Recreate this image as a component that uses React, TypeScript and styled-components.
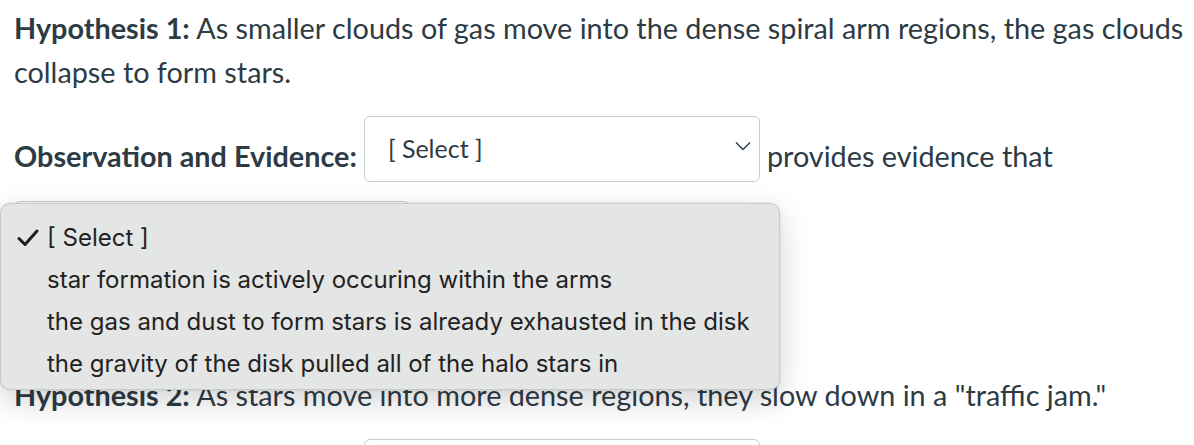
import React from 'react';
import styled, { createGlobalStyle } from 'styled-components';

const GlobalStyle = createGlobalStyle`
    html, body {
        margin: 0;
        padding: 0;
        background: #ffffff;
    }
    body {
        font-family: Lato, "Liberation Sans", sans-serif;
        color: #2d3b45;
        overflow: hidden;
    }
`;

const Page = styled.div`
    position: relative;
    width: 1194px;
    height: 445px;
    padding: 6px 4px 0 14px;
    box-sizing: border-box;
    overflow: hidden;
`;

const Para = styled.p`
    margin: 0;
    font-size: 28.8px;
    line-height: 44px;
    strong {
        font-weight: 700;
    }
`;

const Row = styled.div`
    display: flex;
    flex-wrap: wrap;
    align-items: center;
    column-gap: 7px;
    row-gap: 19px;
    margin-top: 22px;
    font-size: 28.8px;
`;

const Label = styled.strong`
    font-weight: 700;
    margin-top: 14px;
`;

const Plain = styled.span`
    margin-top: 14px;
`;

const SelectBox = styled.div`
    display: flex;
    align-items: center;
    justify-content: space-between;
    width: 396px;
    height: 66px;
    box-sizing: border-box;
    padding: 0 8px 0 23px;
    border: 1px solid #c7cdd1;
    border-radius: 6px;
    background: #fff;
    font-size: 25px;
    color: #2d3b45;
    span {
        margin-top: -2px;
    }
`;

const Chevron = styled.svg`
    width: 16px;
    height: 10px;
    margin-top: -6px;
`;

const Spacer = styled.div<{ h: number }>`
    height: ${p => p.h}px;
`;

const Menu = styled.div`
    position: absolute;
    left: 0;
    top: 203px;
    width: 780px;
    height: 187px;
    box-sizing: border-box;
    padding-top: 12px;
    background: #e4e5e5;
    border: 1px solid #c9caca;
    border-radius: 10px;
    box-shadow: 0 10px 30px rgba(0, 0, 0, 0.18), 0 0 2px rgba(0, 0, 0, 0.15);
    font-family: Inter, "Liberation Sans", sans-serif;
    font-size: 24px;
    color: #222;
`;

const Item = styled.div`
    display: flex;
    align-items: center;
    height: 42px;
    padding-left: 46px;
    position: relative;
`;

const Check = styled.svg`
    position: absolute;
    left: 16px;
    top: 13px;
    width: 22px;
    height: 18px;
`;

const SelectField = ({ text }: { text: string }) => (
    <SelectBox>
        <span>{text}</span>
        <Chevron viewBox="0 0 16 10">
            <polyline points="1,1.5 8,8.5 15,1.5" fill="none" stroke="#2d3b45" strokeWidth="1.4" />
        </Chevron>
    </SelectBox>
);

const options = [
    '[ Select ]',
    'star formation is actively occuring within the arms',
    'the gas and dust to form stars is already exhausted in the disk',
    'the gravity of the disk pulled all of the halo stars in',
];

const App: React.FC = () => {
    return (
        <>
            <GlobalStyle />
            <Page>
                <Para>
                    <strong>Hypothesis 1:</strong> As smaller clouds of gas move into the dense spiral arm regions, the gas clouds collapse to form stars.
                </Para>
                <Row>
                    <Label>Observation and Evidence:</Label>
                    <SelectField text="[ Select ]" />
                    <Plain>provides evidence that</Plain>
                    <SelectField text="[ Select ]" />
                </Row>
                <Spacer h={106} />
                <Para>
                    <strong>Hypothesis 2:</strong> As stars move into more dense regions, they slow down in a "traffic jam."
                </Para>
                <Row>
                    <Label>Observation and Evidence:</Label>
                    <SelectField text="[ Select ]" />
                </Row>

                <Menu>
                    {options.map((o, i) => (
                        <Item key={o}>
                            {i === 0 && (
                                <Check viewBox="0 0 22 18">
                                    <polyline points="2,9.5 8,15.5 20,2" fill="none" stroke="#1e1e1e" strokeWidth="3" strokeLinecap="round" strokeLinejoin="round" />
                                </Check>
                            )}
                            {o}
                        </Item>
                    ))}
                </Menu>
            </Page>
        </>
    );
};

export default App;
